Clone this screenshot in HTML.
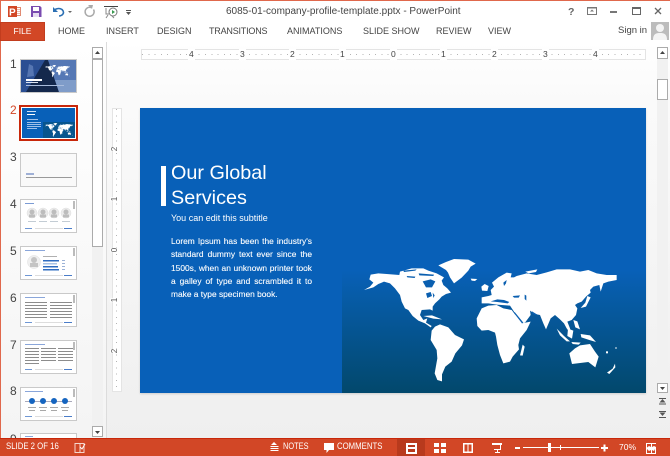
<!DOCTYPE html>
<html><head><meta charset="utf-8">
<style>
html,body{margin:0;padding:0;width:670px;height:456px;overflow:hidden;background:#fff}
body{position:relative;font-family:"Liberation Sans",sans-serif;color:#444}
.a{position:absolute;white-space:nowrap}
.tab{position:absolute;top:25px;font-size:9px;line-height:12px;color:#444;white-space:nowrap}
.num{position:absolute;left:10px;font-size:12px;line-height:14px;color:#444}
.th{position:absolute;left:20px;width:55px;height:32px;background:#fff;border:1px solid #c9c9c9;overflow:hidden}
.th svg{display:block;filter:blur(.35px)}
.rn{position:absolute;font-size:8px;line-height:10px;color:#555}
.ln{position:absolute;left:171px;width:141px;height:13px;font-size:8.4px;line-height:13px;color:#fff;text-align:justify;text-align-last:justify;white-space:nowrap;-webkit-text-stroke:.1px #fff}
.st{position:absolute;top:441px;font-size:9.500px;line-height:12px;color:#fff;white-space:nowrap;transform:scaleX(.82);transform-origin:0 0}
.sb{position:absolute;background:#fff;border:1px solid #ababab;box-sizing:border-box}
</style></head><body>
<!-- window frame -->
<div class="a" style="left:0;top:0;width:670px;height:1px;background:#e0684c"></div>
<div class="a" style="left:0;top:0;width:1px;height:438px;background:#e0684c"></div>

<!-- main area -->
<div class="a" style="left:1px;top:42px;width:105px;height:396px;background:linear-gradient(#fff,#f4f4f4)"></div>
<div class="a" style="left:107px;top:42px;width:563px;height:396px;background:linear-gradient(#fff 0,#fafafa 15%,#efefef 100%)"></div>
<div class="a" style="left:106px;top:42px;width:1px;height:396px;background:#dcdcdc"></div>

<!-- QAT icons -->
<svg class="a" style="left:0;top:0" width="140" height="22" viewBox="0 0 140 22">
<rect x="14.500" y="7.500" width="6" height="8" fill="#fff" stroke="#e08a72"/>
<path d="M16 9.500h4M16 11.500h4M16 13.500h4" stroke="#e8a592" stroke-width=".8"/>
<rect x="8" y="6" width="9" height="11" fill="#d24726"/>
<text x="9" y="15.500" font-size="10" font-weight="bold" fill="#fff" font-family="Liberation Sans">P</text>
<path d="M31 6h9l1.500 1.500V17H31z" fill="#7a4bb0"/><rect x="33" y="7" width="6" height="4" fill="#fff"/><rect x="33" y="13" width="6" height="4" fill="#e6dcf0"/>
<path d="M55 9.500 q4-2 7 0 q3 3 0 5.500 q-1.500 1-3 1" fill="none" stroke="#2b6fb3" stroke-width="1.600"/><path d="M53 7v5h5z" fill="#2b6fb3"/>
<path d="M68 11h4l-2 2z" fill="#666"/>
<path d="M91 7.500a4.500 4.500 0 1 0 2.500 2" fill="none" stroke="#aaa" stroke-width="1.500"/><path d="M88 5l5 0-1 4z" fill="#aaa"/>
<rect x="104" y="6" width="14" height="1" fill="#444"/><circle cx="113" cy="12" r="4" fill="none" stroke="#777"/><path d="M112 10l3 2-3 2z" fill="#3a9a50"/><path d="M106 8v6h3M108 15l-2 3M112 16l2 2" stroke="#888" fill="none"/>
<rect x="126" y="10" width="5" height="1" fill="#555"/><path d="M126 12h5l-2.500 3z" fill="#555"/>
</svg>

<div class="a" style="left:226px;top:5px;font-size:10px;line-height:13px;color:#444">6085-01-company-profile-template.pptx - PowerPoint</div>

<!-- window controls -->
<svg class="a" style="left:560px;top:0" width="110" height="22" viewBox="0 0 110 22">
<text x="8" y="15" font-size="10.500" font-weight="bold" fill="#666" font-family="Liberation Sans">?</text>
<rect x="27.500" y="7.500" width="9" height="7" fill="none" stroke="#777"/><rect x="27" y="7" width="10" height="1.500" fill="#777"/><path d="M32 9.500l-2 2h4z" fill="#777"/>
<rect x="50" y="11" width="7" height="2" fill="#777"/>
<rect x="72.500" y="7.500" width="8" height="7" fill="none" stroke="#666"/><rect x="72" y="7" width="9" height="2" fill="#666"/>
<path d="M95 8l6 6M101 8l-6 6" stroke="#666" stroke-width="1.300"/>
</svg>

<!-- ribbon tabs -->
<div class="a" style="left:0;top:22px;width:45px;height:19px;background:#d24726;border:1px solid #c23d1e;box-sizing:border-box;color:#fff;font-size:8.5px;line-height:17px;text-align:center">FILE</div>
<div class="tab" style="left:58px">HOME</div>
<div class="tab" style="left:106px">INSERT</div>
<div class="tab" style="left:157px">DESIGN</div>
<div class="tab" style="left:209px;letter-spacing:-.2px">TRANSITIONS</div>
<div class="tab" style="left:287px">ANIMATIONS</div>
<div class="tab" style="left:363px">SLIDE SHOW</div>
<div class="tab" style="left:436px">REVIEW</div>
<div class="tab" style="left:488px">VIEW</div>
<div class="a" style="left:618px;top:24px;font-size:9.500px;line-height:13px;color:#444">Sign in</div>
<svg class="a" style="left:651px;top:22px" width="18" height="18" viewBox="0 0 18 18"><rect width="18" height="18" fill="#bcbcbc"/><circle cx="9" cy="6" r="4" fill="#f4f4f4"/><path d="M2 18c0-6 3-7 7-7s7 1 7 7z" fill="#f4f4f4"/></svg>

<!-- left scrollbar -->
<div class="a" style="left:92px;top:47px;width:11px;height:390px;background:#f1f1f1"></div>
<div class="sb" style="left:92px;top:47px;width:11px;height:12px"></div>
<div class="sb" style="left:92px;top:59px;width:11px;height:188px"></div>
<div class="sb" style="left:92px;top:426px;width:11px;height:11px"></div>
<svg class="a" style="left:92px;top:47px" width="11" height="390" viewBox="0 0 11 390"><path d="M3 7l2.500-3 2.500 3z" fill="#444"/><path d="M3 384l2.500 3 2.500-3z" fill="#444"/></svg>

<!-- slide numbers -->
<div class="num" style="top:57px">1</div>
<div class="num" style="top:103px;color:#d24726">2</div>
<div class="num" style="top:150px">3</div>
<div class="num" style="top:197px">4</div>
<div class="num" style="top:244px">5</div>
<div class="num" style="top:291px">6</div>
<div class="num" style="top:338px">7</div>
<div class="num" style="top:384px">8</div>
<div class="num" style="top:432px;height:6px;overflow:hidden">9</div>

<!-- thumbnails -->
<div class="th" style="top:59px"><svg width="55" height="32" viewBox="0 0 55 32">
<rect width="55" height="32" fill="#2b4f93"/><path d="M8 4l4 2 1 10-7 1z" fill="#5676b2"/><path d="M24 0h3L38 32H5z" fill="#14284c"/><path d="M27 0h28v32H38z" fill="#5578b5"/><path d="M34 20h21v12H38z" fill="#7f9cc9"/>
<g transform="translate(21.600,3.100) scale(.033)"><use href="#mp"/></g>
<rect x="5" y="19" width="16" height="2" fill="#fff"/><rect x="5" y="22" width="12" height="1" fill="#dbe4f2"/><rect x="5" y="25" width="38" height="1" fill="#a9bcdc"/></svg></div>

<div class="a" style="left:19px;top:105px;width:59px;height:36px;box-sizing:border-box;border:2px solid #c8270a;background:#fff"></div>
<div class="a" style="left:21px;top:107px;width:55px;height:32px;box-sizing:border-box;border:1px solid #fff;background:#0860b8;overflow:hidden"><svg style="display:block;filter:blur(.3px)" width="53" height="30" viewBox="0 0 53 30">
<rect width="53" height="30" fill="#0860b8"/><rect x="21" y="14" width="32" height="16" fill="#07558e"/>
<rect x="5" y="3" width="9" height="1" fill="#cfe0f4"/><rect x="5" y="6" width="8" height="1" fill="#fff"/><rect x="5" y="11" width="11" height="1" fill="#9fc0e8"/><rect x="5" y="14" width="14" height="1" fill="#9fc0e8"/><rect x="5" y="16" width="14" height="1" fill="#9fc0e8"/><rect x="5" y="18" width="14" height="1" fill="#9fc0e8"/><rect x="5" y="20" width="10" height="1" fill="#9fc0e8"/>
<g transform="translate(20.300,12.900) scale(.037)"><use href="#mp"/></g></svg></div>

<div class="th" style="top:153px"><svg width="55" height="32" viewBox="0 0 55 32"><rect width="55" height="32" fill="#f9f9f9"/><rect x="5" y="19" width="8" height="2" fill="#9fb0d6"/><rect x="5" y="23" width="46" height="1" fill="#999"/></svg></div>

<div class="th" style="top:199px"><svg width="55" height="32" viewBox="0 0 55 32"><rect x="4" y="3" width="9" height="1" fill="#7b9bd4"/><rect x="52" y="1" width="2" height="8" fill="#bbb"/>
<g fill="#ececec" stroke="#ddd" stroke-width=".5"><circle cx="11" cy="13" r="5"/><circle cx="22" cy="13" r="5"/><circle cx="33" cy="13" r="5"/><circle cx="45" cy="13" r="5"/></g>
<g fill="#bdbdbd"><circle cx="11" cy="12" r="2.500"/><circle cx="22" cy="12" r="2.500"/><circle cx="33" cy="12" r="2.500"/><circle cx="45" cy="12" r="2.500"/><rect x="8" y="14.500" width="6" height="3"/><rect x="19" y="14.500" width="6" height="3"/><rect x="30" y="14.500" width="6" height="3"/><rect x="42" y="14.500" width="6" height="3"/></g>
<g fill="#c3ccd4"><rect x="7" y="21" width="8" height="1"/><rect x="18" y="21" width="8" height="1"/><rect x="29" y="21" width="8" height="1"/><rect x="41" y="21" width="8" height="1"/></g>
<rect x="4" y="28" width="7" height="1" fill="#6f97d4"/><rect x="14" y="28" width="28" height="1" fill="#ddd"/><rect x="43" y="28" width="8" height="1" fill="#4a7cc8"/></svg></div>

<div class="th" style="top:246px"><svg width="55" height="32" viewBox="0 0 55 32"><rect x="4" y="3" width="20" height="1" fill="#8aa6da"/><rect x="52" y="1" width="2" height="8" fill="#bbb"/>
<circle cx="13" cy="15" r="6.500" fill="#f0f0f0" stroke="#ddd" stroke-width=".5"/><circle cx="13" cy="13" r="3" fill="#c4c4c4"/><rect x="9" y="16" width="8" height="4" fill="#c4c4c4"/><rect x="22" y="9" width="14" height="1" fill="#b0b0b0"/>
<rect x="22" y="13" width="16" height="1.500" fill="#2f6cc0"/><rect x="22" y="16" width="14" height="1.500" fill="#a9c3e6"/><rect x="22" y="19" width="15" height="1.500" fill="#2f6cc0"/><rect x="22" y="22" width="16" height="1.500" fill="#2f6cc0"/><rect x="41" y="13" width="3" height="1" fill="#9cb2d6"/><rect x="41" y="16" width="3" height="1" fill="#9cb2d6"/><rect x="41" y="19" width="3" height="1" fill="#9cb2d6"/><rect x="41" y="22" width="3" height="1" fill="#9cb2d6"/>
<rect x="4" y="28" width="7" height="1" fill="#6f97d4"/><rect x="14" y="28" width="28" height="1" fill="#ddd"/><rect x="43" y="28" width="8" height="1" fill="#4a7cc8"/></svg></div>

<div class="th" style="top:293px"><svg width="55" height="32" viewBox="0 0 55 32"><rect x="4" y="3" width="20" height="1" fill="#8aa6da"/><rect x="52" y="1" width="2" height="8" fill="#bbb"/>
<g fill="#8c8c8c"><rect x="4" y="8" width="22" height="1"/><rect x="4" y="11" width="22" height="1"/><rect x="4" y="14" width="22" height="1"/><rect x="4" y="17" width="22" height="1"/><rect x="4" y="20" width="22" height="1"/><rect x="4" y="23" width="22" height="1"/><rect x="29" y="8" width="22" height="1"/><rect x="29" y="11" width="22" height="1"/><rect x="29" y="14" width="22" height="1"/><rect x="29" y="17" width="22" height="1"/><rect x="29" y="20" width="22" height="1"/><rect x="29" y="23" width="22" height="1"/></g>
<rect x="4" y="28" width="7" height="1" fill="#6f97d4"/><rect x="14" y="28" width="28" height="1" fill="#ddd"/><rect x="43" y="28" width="8" height="1" fill="#4a7cc8"/></svg></div>

<div class="th" style="top:340px"><svg width="55" height="32" viewBox="0 0 55 32"><rect x="4" y="3" width="20" height="1" fill="#8aa6da"/><rect x="52" y="1" width="2" height="8" fill="#bbb"/>
<g fill="#8c8c8c"><rect x="4" y="7" width="14" height="1"/><rect x="4" y="10" width="14" height="1"/><rect x="4" y="13" width="14" height="1"/><rect x="4" y="16" width="14" height="1"/><rect x="4" y="19" width="14" height="1"/><rect x="4" y="22" width="14" height="1"/><rect x="20" y="7" width="15" height="1"/><rect x="20" y="10" width="15" height="1"/><rect x="20" y="13" width="15" height="1"/><rect x="20" y="16" width="15" height="1"/><rect x="20" y="19" width="15" height="1"/><rect x="37" y="7" width="15" height="1"/><rect x="37" y="10" width="15" height="1"/><rect x="37" y="13" width="15" height="1"/><rect x="37" y="16" width="15" height="1"/><rect x="37" y="19" width="15" height="1"/></g>
<rect x="4" y="28" width="7" height="1" fill="#6f97d4"/><rect x="14" y="28" width="28" height="1" fill="#ddd"/><rect x="43" y="28" width="8" height="1" fill="#4a7cc8"/></svg></div>

<div class="th" style="top:387px"><svg width="55" height="32" viewBox="0 0 55 32"><rect x="4" y="3" width="18" height="1" fill="#8aa6da"/><rect x="52" y="1" width="2" height="8" fill="#bbb"/>
<rect x="4" y="13" width="47" height="1" fill="#aab"/><g fill="#1565c0"><circle cx="11" cy="13" r="3"/><circle cx="22" cy="13" r="3"/><circle cx="33" cy="13" r="3"/><circle cx="44" cy="13" r="3"/></g>
<g fill="#a8a8a8"><rect x="7" y="19" width="8" height="1"/><rect x="18" y="19" width="8" height="1"/><rect x="29" y="19" width="8" height="1"/><rect x="40" y="19" width="8" height="1"/><rect x="8" y="22" width="6" height="1"/><rect x="19" y="22" width="6" height="1"/><rect x="30" y="22" width="6" height="1"/><rect x="41" y="22" width="6" height="1"/></g>
<rect x="4" y="28" width="7" height="1" fill="#6f97d4"/><rect x="14" y="28" width="28" height="1" fill="#ddd"/><rect x="43" y="28" width="8" height="1" fill="#4a7cc8"/></svg></div>

<div class="a" style="left:20px;top:433px;width:57px;height:5px;background:#fff;border:1px solid #c9c9c9;border-bottom:0;box-sizing:border-box"><div style="position:absolute;left:4px;top:2px;width:8px;height:1px;background:#8aa6da"></div></div>

<!-- horizontal ruler -->
<div class="a" style="left:141px;top:49px;width:505px;height:11px;box-sizing:border-box;border:1px solid #e4e4e4;background:#fff repeating-linear-gradient(90deg,#b4b4b4 0,#b4b4b4 1px,transparent 1px,transparent 6.3px) 0 4px/100% 1px no-repeat"></div>
<div class="a" style="left:141px;top:49px;width:505px;height:11px;overflow:hidden;font-size:8.5px;line-height:11px;color:#444">
<span style="position:absolute;left:47px;background:#fff;padding:0 1px">4</span><span style="position:absolute;left:98px;background:#fff;padding:0 1px">3</span><span style="position:absolute;left:148px;background:#fff;padding:0 1px">2</span><span style="position:absolute;left:198px;background:#fff;padding:0 1px">1</span><span style="position:absolute;left:249px;background:#fff;padding:0 1px">0</span><span style="position:absolute;left:299px;background:#fff;padding:0 1px">1</span><span style="position:absolute;left:350px;background:#fff;padding:0 1px">2</span><span style="position:absolute;left:401px;background:#fff;padding:0 1px">3</span><span style="position:absolute;left:451px;background:#fff;padding:0 1px">4</span>
</div>

<!-- vertical ruler -->
<div class="a" style="left:112px;top:108px;width:10px;height:284px;box-sizing:border-box;border:1px solid #e4e4e4;background:#fff repeating-linear-gradient(180deg,#b4b4b4 0,#b4b4b4 1px,transparent 1px,transparent 6.3px) 3px 0/1px 100% no-repeat"></div>
<div class="rn" style="left:113px;top:144px;transform:rotate(-90deg);background:#fff">2</div>
<div class="rn" style="left:113px;top:194px;transform:rotate(-90deg);background:#fff">1</div>
<div class="rn" style="left:113px;top:245px;transform:rotate(-90deg);background:#fff">0</div>
<div class="rn" style="left:113px;top:295px;transform:rotate(-90deg);background:#fff">1</div>
<div class="rn" style="left:113px;top:346px;transform:rotate(-90deg);background:#fff">2</div>

<!-- slide -->
<div class="a" style="left:140px;top:108px;width:506px;height:285px;background:#0860b8;box-shadow:0 1px 2px rgba(0,0,0,.15)"></div>
<div class="a" style="left:342px;top:270px;width:304px;height:123px;background:linear-gradient(#0860b8 0,#075ca8 20%,#02486c 100%)"></div>
<div class="a" style="left:161px;top:166px;width:5px;height:40px;background:#fff"></div>
<div class="a" style="left:171px;top:161px;font-size:19.800px;line-height:25px;color:#fff">Our Global<br>Services</div>
<div class="a" style="left:171px;top:212px;font-size:9px;line-height:13px;color:#fff">You can edit this subtitle</div>
<div class="ln" style="top:235px">Lorem Ipsum has been the industry's</div>
<div class="ln" style="top:248px">standard dummy text ever since the</div>
<div class="ln" style="top:262px">1500s, when an unknown printer took</div>
<div class="ln" style="top:275px">a galley of type and scrambled it to</div>
<div class="ln" style="top:288px;text-align-last:left">make a type specimen book.</div>

<!-- map -->
<svg class="a" style="left:340px;top:240px;filter:blur(.25px)" width="300" height="160" viewBox="0 0 900 480">
<g id="mp"><g fill="#fff">
<path d="M72 150L90 140L100 128L88 118L92 104L115 100L140 102L178 105L180 95L215 85L250 85L265 92L290 100L312 112L305 122L310 135L322 145L333 158L318 162L305 170L298 178L285 190L278 200L278 212L270 208L245 210L240 225L250 240L262 235L258 248L275 258L272 262L255 250L235 242L218 228L205 210L195 205L185 185L180 165L165 145L150 130L132 125L115 132L100 142Z"/>
<path d="M295 76L318 66L342 57L385 59L407 71L392 80L385 92L365 113L342 130L330 112L324 98L318 90Z"/>
<path d="M392 116L412 117L405 123L395 122Z"/>
<path d="M275 272L285 260L300 253L325 262L345 285L372 298L366 316L346 340L335 365L316 380L306 403L306 424L292 420L284 400L292 355L290 330L272 300Z"/>
<path d="M410 235L425 205L445 197L470 195L490 205L515 210L530 230L545 250L572 245L560 270L540 295L535 315L537 328L518 350L510 365L490 370L480 345L472 315L468 290L465 278L445 270L425 272L412 258Z"/>
<path d="M548 314L554 320L548 347L540 346Z"/>
<path d="M425 190L425 172L445 168L455 165L452 150L462 140L456 128L475 112L500 98L515 100L512 112L522 112L530 108L560 100L590 105L620 97L650 88L690 88L720 95L745 90L770 100L800 105L830 105L830 120L805 125L790 130L782 155L778 135L760 140L750 150L752 158L738 170L725 185L712 190L705 195L712 205L708 225L695 240L682 245L690 265L695 285L680 265L672 250L660 238L645 225L632 235L618 268L610 250L600 225L585 222L570 212L572 225L555 248L537 252L530 235L522 215L510 197L470 194L445 190Z"/>
<path d="M424 140L434 132L446 138L442 153L426 152Z"/>
<path d="M742 168L752 172L738 200L722 204L736 188Z"/>
<path d="M688 340L705 325L720 316L750 312L765 335L776 350L766 382L745 366L696 372Z"/>
<path d="M825 371L826 382L808 402L801 398L818 386Z"/><rect x="798" y="334" width="6" height="6"/><rect x="826" y="322" width="4" height="4"/>
<path d="M650 266L672 288L690 304L680 304L660 286Z"/>
<path d="M684 266L700 272L696 296L682 288Z"/>
<path d="M700 240L712 244L720 268L706 262Z"/>
<path d="M722 282L750 286L768 306L748 300L724 292Z"/>
<path d="M694 306L722 308L716 314L698 312Z"/>
<path d="M250 228L276 226L306 238L280 236Z"/>
<path d="M556 95L592 88L588 96L566 100Z"/>
</g>
<g fill="#0a5fb0">
<path d="M248 124L272 118L286 124L276 142L258 142Z"/>
<path d="M258 160L272 156L276 168L262 174Z"/>
<path d="M278 158L284 166L280 174Z"/>
<path d="M190 92L230 88L226 92L192 96Z"/>
<path d="M236 100L282 104L280 108L238 106Z"/>
<path d="M200 108L226 110L224 114L202 112Z"/>
<path d="M452 184L472 178L492 180L508 186L503 190L472 186Z"/>
<path d="M518 168L540 166L536 173L522 173Z"/>
<path d="M554 164L559 167L559 182L554 177Z"/>
<path d="M521 218L524 216L550 248L546 250Z"/>
<path d="M490 128L500 120L498 130L492 138Z"/>
<path d="M576 214L592 224L586 225L576 220Z"/>
</g></g>
</svg>

<!-- right scrollbar -->
<div class="a" style="left:657px;top:47px;width:11px;height:345px;background:#f1f1f1"></div>
<div class="sb" style="left:657px;top:47px;width:11px;height:12px"></div>
<div class="sb" style="left:657px;top:79px;width:11px;height:21px"></div>
<div class="sb" style="left:657px;top:383px;width:11px;height:10px"></div>
<svg class="a" style="left:657px;top:47px" width="13" height="380" viewBox="0 0 13 380">
<path d="M3 7l2.500-3 2.500 3z" fill="#444"/><path d="M3 340l2.500 3 2.500-3z" fill="#444"/>
<g fill="#555"><rect x="2" y="351" width="7" height="1"/><path d="M5.500 352L2.500 355.500h6z"/><rect x="2" y="356.500" width="7" height="1"/>
<rect x="2" y="364" width="7" height="1"/><path d="M2.500 365.500h6l-3 3.500z"/><rect x="2" y="370" width="7" height="1"/></g>
</svg>

<!-- status bar -->
<div class="a" style="left:0;top:438px;width:670px;height:18px;background:#d24726;border-top:1px solid #c8270a;box-sizing:border-box"></div>
<div class="a" style="left:397px;top:439px;width:28px;height:17px;background:#b83a1d"></div>
<div class="st" style="left:6px">SLIDE 2 OF 16</div>
<div class="st" style="left:283px;transform:scaleX(.78)">NOTES</div>
<div class="st" style="left:337px">COMMENTS</div>
<div class="st" style="left:619px;font-size:8.500px;transform:none">70%</div>
<svg class="a" style="left:0;top:438px" width="670" height="18" viewBox="0 0 670 18">
<g fill="none" stroke="#fff">
<path d="M75 5.500h5v9h-5zM80 5.500h4v9h-4z" stroke="#f5d6cc"/><path d="M80 9l2 2 3-5"/>
</g>
<g fill="#fff">
<path d="M274 4l3 3h-6z"/><rect x="270.500" y="8" width="8" height="1"/><rect x="270.500" y="10" width="8" height="1"/><rect x="270.500" y="12" width="8" height="1"/>
<path d="M324 5h10v7h-5l-2.500 3v-3H324z"/>
<path d="M406 5h11v11h-11zM408 7v2h7V7zM408 11v3h7v-3z" fill-rule="evenodd"/>
<rect x="434" y="5" width="5" height="4"/><rect x="441" y="5" width="5" height="4"/><rect x="434" y="11" width="5" height="4"/><rect x="441" y="11" width="5" height="4"/>
<path d="M463 5h10v10h-10zM464.500 6.500v7h3v-7zM468.500 6.500v7h3v-7z" fill-rule="evenodd"/>
<path d="M492 5h10v2h-1v5h-3v2h2v1h-5v-1h2v-2h-3V7h-2zM494 7v4h6V7z" fill-rule="evenodd"/>
<rect x="515" y="9" width="5" height="2"/>
<rect x="523" y="9" width="76" height="1"/>
<rect x="548" y="5" width="3" height="9"/>
<rect x="560" y="7" width="1" height="5"/>
<path d="M601 9h2.500V6.500h2V9H608v2h-2.500v2.500h-2V11H601z"/>
<path d="M646 5h10v11h-10zM647 6v3.500l2-1.500 2 1 0-3zM652 6v3l2-1 2 1V6zM647 11v4h4v-3l-2 1zM652 12v3h3v-4l-1 2z" fill-rule="evenodd"/>
</g>
</svg>
</body></html>
